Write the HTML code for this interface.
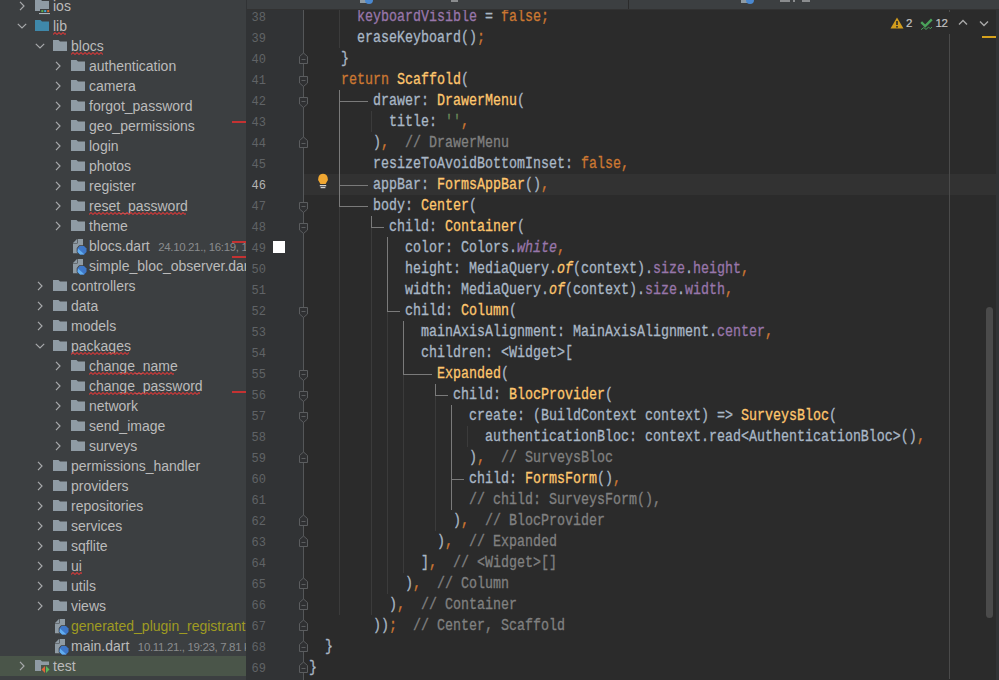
<!DOCTYPE html><html><head><meta charset="utf-8"><style>
*{box-sizing:border-box}
svg{display:block}
html,body{margin:0;padding:0;width:999px;height:680px;overflow:hidden;background:#2b2b2b}
.abs{position:absolute}
#side{position:absolute;left:0;top:0;width:246px;height:680px;background:#3c3f41;overflow:hidden}
.row{position:absolute;left:0;width:246px;height:20px;white-space:nowrap}
.row .t{position:absolute;top:0;line-height:20px;font:14px/20px "Liberation Sans",sans-serif;color:#bbbbbb}
.row .x{color:#8a8c8e;margin-left:8.5px;font-size:11.5px;letter-spacing:-0.35px}
.sq{position:absolute;height:4px;background-repeat:repeat-x}
#gut{position:absolute;left:246px;top:0;width:57px;height:680px;background:#313335}
.ln{position:absolute;left:246px;width:20px;text-align:right;font:12px/21px "Liberation Mono",monospace;color:#606366;transform-origin:0 0;transform:scaleY(1.13)}
.code{position:absolute;left:309px;white-space:pre;font:13.333px/21px "Liberation Mono",monospace;color:#a9b7c6;transform-origin:0 0;transform:scaleY(1.17);-webkit-text-stroke:0.25px}
.k{color:#cc7832}.c{color:#ffc66d}.s{color:#6a8759}.cm{color:#808080}.p{color:#9876aa}.i{font-style:italic}.ic{color:#ffc66d;font-style:italic}.pi{color:#9876aa;font-style:italic}
.g{position:absolute;background:#5e5e5e}
.ig{position:absolute;background:#393939;width:1px}
</style></head><body>

<div id="side">
<div class="row" style="top:-4px;">
<div class="abs" style="left:17.5px;top:4.5px"><svg width="8" height="10" viewBox="0 0 8 10"><path d="M2 0.8 L6 5 L2 9.2" fill="none" stroke="#a7a9ab" stroke-width="1.2"/></svg></div>
<div class="abs" style="left:35px;top:4px"><svg width="16" height="15" viewBox="0 0 16 15"><path d="M0 -1 H5.5 L7 1 H14 V11 H0 Z" fill="#8f9ba4"/><rect x="10.3" y="9" width="4.5" height="3.6" fill="#3c3f41"/><rect x="5" y="9" width="10" height="3.6" fill="#3c3f41"/><rect x="6.3" y="10.1" width="2" height="2" fill="#5fb04a"/><rect x="9.2" y="10.1" width="2" height="2" fill="#3fa8d8"/><rect x="12.2" y="10.1" width="2" height="2" fill="#e06a2a"/><rect x="4" y="13" width="11" height="1.1" fill="#aeb5ba"/></svg></div>
<div class="t" style="left:53px;color:#bbbbbb">ios</div>
</div>
<div class="row" style="top:16px;">
<div class="abs" style="left:17px;top:5.5px"><svg width="10" height="8" viewBox="0 0 10 8"><path d="M0.8 1.8 L5 6 L9.2 1.8" fill="none" stroke="#a7a9ab" stroke-width="1.2"/></svg></div>
<div class="abs" style="left:35px;top:4px"><svg width="14" height="11" viewBox="0 0 14 11"><path d="M0 0 H5.5 L7 1.5 H14 V11 H0 Z" fill="#3f88aa"/></svg></div>
<div class="t" style="left:53px;color:#bbbbbb">lib</div>
<div class="abs" style="left:53px;top:15.5px;height:3px;width:13px;overflow:hidden"><svg width="300" height="3" viewBox="0 0 300 3"><path d="M0 2.5 L2 0.5 L4 2.5 L6 0.5 L8 2.5 L10 0.5 L12 2.5 L14 0.5 L16 2.5 L18 0.5 L20 2.5 L22 0.5 L24 2.5 L26 0.5 L28 2.5 L30 0.5 L32 2.5 L34 0.5 L36 2.5 L38 0.5 L40 2.5 L42 0.5 L44 2.5 L46 0.5 L48 2.5 L50 0.5 L52 2.5 L54 0.5 L56 2.5 L58 0.5 L60 2.5 L62 0.5 L64 2.5 L66 0.5 L68 2.5 L70 0.5 L72 2.5 L74 0.5 L76 2.5 L78 0.5 L80 2.5 L82 0.5 L84 2.5 L86 0.5 L88 2.5 L90 0.5 L92 2.5 L94 0.5 L96 2.5 L98 0.5 L100 2.5 L102 0.5 L104 2.5 L106 0.5 L108 2.5 L110 0.5 L112 2.5 L114 0.5 L116 2.5 L118 0.5 L120 2.5 L122 0.5 L124 2.5 L126 0.5 L128 2.5 L130 0.5 L132 2.5 L134 0.5 L136 2.5 L138 0.5 L140 2.5 L142 0.5 L144 2.5 L146 0.5 L148 2.5 L150 0.5 L152 2.5 L154 0.5 L156 2.5 L158 0.5 L160 2.5 L162 0.5 L164 2.5 L166 0.5 L168 2.5 L170 0.5 L172 2.5 L174 0.5 L176 2.5 L178 0.5 L180 2.5 L182 0.5 L184 2.5 L186 0.5 L188 2.5 L190 0.5 L192 2.5 L194 0.5 L196 2.5 L198 0.5 L200 2.5 L202 0.5 L204 2.5 L206 0.5 L208 2.5 L210 0.5 L212 2.5 L214 0.5 L216 2.5 L218 0.5 L220 2.5 L222 0.5 L224 2.5 L226 0.5 L228 2.5 L230 0.5 L232 2.5 L234 0.5 L236 2.5 L238 0.5 L240 2.5 L242 0.5 L244 2.5 L246 0.5 L248 2.5 L250 0.5 L252 2.5 L254 0.5 L256 2.5 L258 0.5 L260 2.5 L262 0.5 L264 2.5 L266 0.5 L268 2.5 L270 0.5 L272 2.5 L274 0.5 L276 2.5 L278 0.5 L280 2.5 L282 0.5 L284 2.5 L286 0.5 L288 2.5 L290 0.5 L292 2.5 L294 0.5 L296 2.5 L298 0.5 L300 2.5" fill="none" stroke="#c03a3a" stroke-width="1.15"/></svg></div>
</div>
<div class="row" style="top:36px;">
<div class="abs" style="left:35px;top:5.5px"><svg width="10" height="8" viewBox="0 0 10 8"><path d="M0.8 1.8 L5 6 L9.2 1.8" fill="none" stroke="#a7a9ab" stroke-width="1.2"/></svg></div>
<div class="abs" style="left:53px;top:4px"><svg width="14" height="11" viewBox="0 0 14 11"><path d="M0 0 H5.5 L7 1.5 H14 V11 H0 Z" fill="#8f9ba4"/></svg></div>
<div class="t" style="left:71px;color:#bbbbbb">blocs</div>
<div class="abs" style="left:71px;top:15.5px;height:3px;width:32px;overflow:hidden"><svg width="300" height="3" viewBox="0 0 300 3"><path d="M0 2.5 L2 0.5 L4 2.5 L6 0.5 L8 2.5 L10 0.5 L12 2.5 L14 0.5 L16 2.5 L18 0.5 L20 2.5 L22 0.5 L24 2.5 L26 0.5 L28 2.5 L30 0.5 L32 2.5 L34 0.5 L36 2.5 L38 0.5 L40 2.5 L42 0.5 L44 2.5 L46 0.5 L48 2.5 L50 0.5 L52 2.5 L54 0.5 L56 2.5 L58 0.5 L60 2.5 L62 0.5 L64 2.5 L66 0.5 L68 2.5 L70 0.5 L72 2.5 L74 0.5 L76 2.5 L78 0.5 L80 2.5 L82 0.5 L84 2.5 L86 0.5 L88 2.5 L90 0.5 L92 2.5 L94 0.5 L96 2.5 L98 0.5 L100 2.5 L102 0.5 L104 2.5 L106 0.5 L108 2.5 L110 0.5 L112 2.5 L114 0.5 L116 2.5 L118 0.5 L120 2.5 L122 0.5 L124 2.5 L126 0.5 L128 2.5 L130 0.5 L132 2.5 L134 0.5 L136 2.5 L138 0.5 L140 2.5 L142 0.5 L144 2.5 L146 0.5 L148 2.5 L150 0.5 L152 2.5 L154 0.5 L156 2.5 L158 0.5 L160 2.5 L162 0.5 L164 2.5 L166 0.5 L168 2.5 L170 0.5 L172 2.5 L174 0.5 L176 2.5 L178 0.5 L180 2.5 L182 0.5 L184 2.5 L186 0.5 L188 2.5 L190 0.5 L192 2.5 L194 0.5 L196 2.5 L198 0.5 L200 2.5 L202 0.5 L204 2.5 L206 0.5 L208 2.5 L210 0.5 L212 2.5 L214 0.5 L216 2.5 L218 0.5 L220 2.5 L222 0.5 L224 2.5 L226 0.5 L228 2.5 L230 0.5 L232 2.5 L234 0.5 L236 2.5 L238 0.5 L240 2.5 L242 0.5 L244 2.5 L246 0.5 L248 2.5 L250 0.5 L252 2.5 L254 0.5 L256 2.5 L258 0.5 L260 2.5 L262 0.5 L264 2.5 L266 0.5 L268 2.5 L270 0.5 L272 2.5 L274 0.5 L276 2.5 L278 0.5 L280 2.5 L282 0.5 L284 2.5 L286 0.5 L288 2.5 L290 0.5 L292 2.5 L294 0.5 L296 2.5 L298 0.5 L300 2.5" fill="none" stroke="#c03a3a" stroke-width="1.15"/></svg></div>
</div>
<div class="row" style="top:56px;">
<div class="abs" style="left:53.5px;top:4.5px"><svg width="8" height="10" viewBox="0 0 8 10"><path d="M2 0.8 L6 5 L2 9.2" fill="none" stroke="#a7a9ab" stroke-width="1.2"/></svg></div>
<div class="abs" style="left:71px;top:4px"><svg width="14" height="11" viewBox="0 0 14 11"><path d="M0 0 H5.5 L7 1.5 H14 V11 H0 Z" fill="#8f9ba4"/></svg></div>
<div class="t" style="left:89px;color:#bbbbbb">authentication</div>
</div>
<div class="row" style="top:76px;">
<div class="abs" style="left:53.5px;top:4.5px"><svg width="8" height="10" viewBox="0 0 8 10"><path d="M2 0.8 L6 5 L2 9.2" fill="none" stroke="#a7a9ab" stroke-width="1.2"/></svg></div>
<div class="abs" style="left:71px;top:4px"><svg width="14" height="11" viewBox="0 0 14 11"><path d="M0 0 H5.5 L7 1.5 H14 V11 H0 Z" fill="#8f9ba4"/></svg></div>
<div class="t" style="left:89px;color:#bbbbbb">camera</div>
</div>
<div class="row" style="top:96px;">
<div class="abs" style="left:53.5px;top:4.5px"><svg width="8" height="10" viewBox="0 0 8 10"><path d="M2 0.8 L6 5 L2 9.2" fill="none" stroke="#a7a9ab" stroke-width="1.2"/></svg></div>
<div class="abs" style="left:71px;top:4px"><svg width="14" height="11" viewBox="0 0 14 11"><path d="M0 0 H5.5 L7 1.5 H14 V11 H0 Z" fill="#8f9ba4"/></svg></div>
<div class="t" style="left:89px;color:#bbbbbb">forgot_password</div>
</div>
<div class="row" style="top:116px;">
<div class="abs" style="left:53.5px;top:4.5px"><svg width="8" height="10" viewBox="0 0 8 10"><path d="M2 0.8 L6 5 L2 9.2" fill="none" stroke="#a7a9ab" stroke-width="1.2"/></svg></div>
<div class="abs" style="left:71px;top:4px"><svg width="14" height="11" viewBox="0 0 14 11"><path d="M0 0 H5.5 L7 1.5 H14 V11 H0 Z" fill="#8f9ba4"/></svg></div>
<div class="t" style="left:89px;color:#bbbbbb">geo_permissions</div>
</div>
<div class="row" style="top:136px;">
<div class="abs" style="left:53.5px;top:4.5px"><svg width="8" height="10" viewBox="0 0 8 10"><path d="M2 0.8 L6 5 L2 9.2" fill="none" stroke="#a7a9ab" stroke-width="1.2"/></svg></div>
<div class="abs" style="left:71px;top:4px"><svg width="14" height="11" viewBox="0 0 14 11"><path d="M0 0 H5.5 L7 1.5 H14 V11 H0 Z" fill="#8f9ba4"/></svg></div>
<div class="t" style="left:89px;color:#bbbbbb">login</div>
</div>
<div class="row" style="top:156px;">
<div class="abs" style="left:53.5px;top:4.5px"><svg width="8" height="10" viewBox="0 0 8 10"><path d="M2 0.8 L6 5 L2 9.2" fill="none" stroke="#a7a9ab" stroke-width="1.2"/></svg></div>
<div class="abs" style="left:71px;top:4px"><svg width="14" height="11" viewBox="0 0 14 11"><path d="M0 0 H5.5 L7 1.5 H14 V11 H0 Z" fill="#8f9ba4"/></svg></div>
<div class="t" style="left:89px;color:#bbbbbb">photos</div>
</div>
<div class="row" style="top:176px;">
<div class="abs" style="left:53.5px;top:4.5px"><svg width="8" height="10" viewBox="0 0 8 10"><path d="M2 0.8 L6 5 L2 9.2" fill="none" stroke="#a7a9ab" stroke-width="1.2"/></svg></div>
<div class="abs" style="left:71px;top:4px"><svg width="14" height="11" viewBox="0 0 14 11"><path d="M0 0 H5.5 L7 1.5 H14 V11 H0 Z" fill="#8f9ba4"/></svg></div>
<div class="t" style="left:89px;color:#bbbbbb">register</div>
</div>
<div class="row" style="top:196px;">
<div class="abs" style="left:53.5px;top:4.5px"><svg width="8" height="10" viewBox="0 0 8 10"><path d="M2 0.8 L6 5 L2 9.2" fill="none" stroke="#a7a9ab" stroke-width="1.2"/></svg></div>
<div class="abs" style="left:71px;top:4px"><svg width="14" height="11" viewBox="0 0 14 11"><path d="M0 0 H5.5 L7 1.5 H14 V11 H0 Z" fill="#8f9ba4"/></svg></div>
<div class="t" style="left:89px;color:#bbbbbb">reset_password</div>
<div class="abs" style="left:89px;top:15.5px;height:3px;width:97px;overflow:hidden"><svg width="300" height="3" viewBox="0 0 300 3"><path d="M0 2.5 L2 0.5 L4 2.5 L6 0.5 L8 2.5 L10 0.5 L12 2.5 L14 0.5 L16 2.5 L18 0.5 L20 2.5 L22 0.5 L24 2.5 L26 0.5 L28 2.5 L30 0.5 L32 2.5 L34 0.5 L36 2.5 L38 0.5 L40 2.5 L42 0.5 L44 2.5 L46 0.5 L48 2.5 L50 0.5 L52 2.5 L54 0.5 L56 2.5 L58 0.5 L60 2.5 L62 0.5 L64 2.5 L66 0.5 L68 2.5 L70 0.5 L72 2.5 L74 0.5 L76 2.5 L78 0.5 L80 2.5 L82 0.5 L84 2.5 L86 0.5 L88 2.5 L90 0.5 L92 2.5 L94 0.5 L96 2.5 L98 0.5 L100 2.5 L102 0.5 L104 2.5 L106 0.5 L108 2.5 L110 0.5 L112 2.5 L114 0.5 L116 2.5 L118 0.5 L120 2.5 L122 0.5 L124 2.5 L126 0.5 L128 2.5 L130 0.5 L132 2.5 L134 0.5 L136 2.5 L138 0.5 L140 2.5 L142 0.5 L144 2.5 L146 0.5 L148 2.5 L150 0.5 L152 2.5 L154 0.5 L156 2.5 L158 0.5 L160 2.5 L162 0.5 L164 2.5 L166 0.5 L168 2.5 L170 0.5 L172 2.5 L174 0.5 L176 2.5 L178 0.5 L180 2.5 L182 0.5 L184 2.5 L186 0.5 L188 2.5 L190 0.5 L192 2.5 L194 0.5 L196 2.5 L198 0.5 L200 2.5 L202 0.5 L204 2.5 L206 0.5 L208 2.5 L210 0.5 L212 2.5 L214 0.5 L216 2.5 L218 0.5 L220 2.5 L222 0.5 L224 2.5 L226 0.5 L228 2.5 L230 0.5 L232 2.5 L234 0.5 L236 2.5 L238 0.5 L240 2.5 L242 0.5 L244 2.5 L246 0.5 L248 2.5 L250 0.5 L252 2.5 L254 0.5 L256 2.5 L258 0.5 L260 2.5 L262 0.5 L264 2.5 L266 0.5 L268 2.5 L270 0.5 L272 2.5 L274 0.5 L276 2.5 L278 0.5 L280 2.5 L282 0.5 L284 2.5 L286 0.5 L288 2.5 L290 0.5 L292 2.5 L294 0.5 L296 2.5 L298 0.5 L300 2.5" fill="none" stroke="#c03a3a" stroke-width="1.15"/></svg></div>
</div>
<div class="row" style="top:216px;">
<div class="abs" style="left:53.5px;top:4.5px"><svg width="8" height="10" viewBox="0 0 8 10"><path d="M2 0.8 L6 5 L2 9.2" fill="none" stroke="#a7a9ab" stroke-width="1.2"/></svg></div>
<div class="abs" style="left:71px;top:4px"><svg width="14" height="11" viewBox="0 0 14 11"><path d="M0 0 H5.5 L7 1.5 H14 V11 H0 Z" fill="#8f9ba4"/></svg></div>
<div class="t" style="left:89px;color:#bbbbbb">theme</div>
</div>
<div class="row" style="top:236px;">
<div class="abs" style="left:72.9px;top:2.8px"><svg width="16" height="17" viewBox="0 0 16 17"><path d="M4.6 0 H10 V14.3 H0 V4.6 H4.6 Z" fill="#8f9ba4"/><path d="M0 4 L4 0 V4 Z" fill="#8f9ba4"/><path d="M6.5 7 L11 7 L13.5 9.5 L13.5 13 L11 15.5 L7 15.5 L4.5 13 L4.5 9.5 Z" fill="#3c3f41" stroke="#3c3f41" stroke-width="1.6" stroke-linejoin="round"/><path d="M6.5 7 L11 7 L13.5 9.5 L13.5 13 L11 15.5 L7 15.5 L4.5 13 L4.5 9.5 Z" fill="#3f78c8"/><path d="M5 9.5 L11.5 15.5 L7 15.5 L4.5 13 Z" fill="#62aef0"/></svg></div>
<div class="t" style="left:89px;color:#bbbbbb">blocs.dart<span class="x">24.10.21., 16:19, 1.2 kB</span></div>
</div>
<div class="row" style="top:256px;">
<div class="abs" style="left:72.9px;top:2.8px"><svg width="16" height="17" viewBox="0 0 16 17"><path d="M4.6 0 H10 V14.3 H0 V4.6 H4.6 Z" fill="#8f9ba4"/><path d="M0 4 L4 0 V4 Z" fill="#8f9ba4"/><path d="M6.5 7 L11 7 L13.5 9.5 L13.5 13 L11 15.5 L7 15.5 L4.5 13 L4.5 9.5 Z" fill="#3c3f41" stroke="#3c3f41" stroke-width="1.6" stroke-linejoin="round"/><path d="M6.5 7 L11 7 L13.5 9.5 L13.5 13 L11 15.5 L7 15.5 L4.5 13 L4.5 9.5 Z" fill="#3f78c8"/><path d="M5 9.5 L11.5 15.5 L7 15.5 L4.5 13 Z" fill="#62aef0"/></svg></div>
<div class="t" style="left:89px;color:#bbbbbb">simple_bloc_observer.dart</div>
</div>
<div class="row" style="top:276px;">
<div class="abs" style="left:35.5px;top:4.5px"><svg width="8" height="10" viewBox="0 0 8 10"><path d="M2 0.8 L6 5 L2 9.2" fill="none" stroke="#a7a9ab" stroke-width="1.2"/></svg></div>
<div class="abs" style="left:53px;top:4px"><svg width="14" height="11" viewBox="0 0 14 11"><path d="M0 0 H5.5 L7 1.5 H14 V11 H0 Z" fill="#8f9ba4"/></svg></div>
<div class="t" style="left:71px;color:#bbbbbb">controllers</div>
</div>
<div class="row" style="top:296px;">
<div class="abs" style="left:35.5px;top:4.5px"><svg width="8" height="10" viewBox="0 0 8 10"><path d="M2 0.8 L6 5 L2 9.2" fill="none" stroke="#a7a9ab" stroke-width="1.2"/></svg></div>
<div class="abs" style="left:53px;top:4px"><svg width="14" height="11" viewBox="0 0 14 11"><path d="M0 0 H5.5 L7 1.5 H14 V11 H0 Z" fill="#8f9ba4"/></svg></div>
<div class="t" style="left:71px;color:#bbbbbb">data</div>
</div>
<div class="row" style="top:316px;">
<div class="abs" style="left:35.5px;top:4.5px"><svg width="8" height="10" viewBox="0 0 8 10"><path d="M2 0.8 L6 5 L2 9.2" fill="none" stroke="#a7a9ab" stroke-width="1.2"/></svg></div>
<div class="abs" style="left:53px;top:4px"><svg width="14" height="11" viewBox="0 0 14 11"><path d="M0 0 H5.5 L7 1.5 H14 V11 H0 Z" fill="#8f9ba4"/></svg></div>
<div class="t" style="left:71px;color:#bbbbbb">models</div>
</div>
<div class="row" style="top:336px;">
<div class="abs" style="left:35px;top:5.5px"><svg width="10" height="8" viewBox="0 0 10 8"><path d="M0.8 1.8 L5 6 L9.2 1.8" fill="none" stroke="#a7a9ab" stroke-width="1.2"/></svg></div>
<div class="abs" style="left:53px;top:4px"><svg width="14" height="11" viewBox="0 0 14 11"><path d="M0 0 H5.5 L7 1.5 H14 V11 H0 Z" fill="#8f9ba4"/></svg></div>
<div class="t" style="left:71px;color:#bbbbbb">packages</div>
<div class="abs" style="left:71px;top:15.5px;height:3px;width:58px;overflow:hidden"><svg width="300" height="3" viewBox="0 0 300 3"><path d="M0 2.5 L2 0.5 L4 2.5 L6 0.5 L8 2.5 L10 0.5 L12 2.5 L14 0.5 L16 2.5 L18 0.5 L20 2.5 L22 0.5 L24 2.5 L26 0.5 L28 2.5 L30 0.5 L32 2.5 L34 0.5 L36 2.5 L38 0.5 L40 2.5 L42 0.5 L44 2.5 L46 0.5 L48 2.5 L50 0.5 L52 2.5 L54 0.5 L56 2.5 L58 0.5 L60 2.5 L62 0.5 L64 2.5 L66 0.5 L68 2.5 L70 0.5 L72 2.5 L74 0.5 L76 2.5 L78 0.5 L80 2.5 L82 0.5 L84 2.5 L86 0.5 L88 2.5 L90 0.5 L92 2.5 L94 0.5 L96 2.5 L98 0.5 L100 2.5 L102 0.5 L104 2.5 L106 0.5 L108 2.5 L110 0.5 L112 2.5 L114 0.5 L116 2.5 L118 0.5 L120 2.5 L122 0.5 L124 2.5 L126 0.5 L128 2.5 L130 0.5 L132 2.5 L134 0.5 L136 2.5 L138 0.5 L140 2.5 L142 0.5 L144 2.5 L146 0.5 L148 2.5 L150 0.5 L152 2.5 L154 0.5 L156 2.5 L158 0.5 L160 2.5 L162 0.5 L164 2.5 L166 0.5 L168 2.5 L170 0.5 L172 2.5 L174 0.5 L176 2.5 L178 0.5 L180 2.5 L182 0.5 L184 2.5 L186 0.5 L188 2.5 L190 0.5 L192 2.5 L194 0.5 L196 2.5 L198 0.5 L200 2.5 L202 0.5 L204 2.5 L206 0.5 L208 2.5 L210 0.5 L212 2.5 L214 0.5 L216 2.5 L218 0.5 L220 2.5 L222 0.5 L224 2.5 L226 0.5 L228 2.5 L230 0.5 L232 2.5 L234 0.5 L236 2.5 L238 0.5 L240 2.5 L242 0.5 L244 2.5 L246 0.5 L248 2.5 L250 0.5 L252 2.5 L254 0.5 L256 2.5 L258 0.5 L260 2.5 L262 0.5 L264 2.5 L266 0.5 L268 2.5 L270 0.5 L272 2.5 L274 0.5 L276 2.5 L278 0.5 L280 2.5 L282 0.5 L284 2.5 L286 0.5 L288 2.5 L290 0.5 L292 2.5 L294 0.5 L296 2.5 L298 0.5 L300 2.5" fill="none" stroke="#c03a3a" stroke-width="1.15"/></svg></div>
</div>
<div class="row" style="top:356px;">
<div class="abs" style="left:53.5px;top:4.5px"><svg width="8" height="10" viewBox="0 0 8 10"><path d="M2 0.8 L6 5 L2 9.2" fill="none" stroke="#a7a9ab" stroke-width="1.2"/></svg></div>
<div class="abs" style="left:71px;top:4px"><svg width="14" height="11" viewBox="0 0 14 11"><path d="M0 0 H5.5 L7 1.5 H14 V11 H0 Z" fill="#8f9ba4"/></svg></div>
<div class="t" style="left:89px;color:#bbbbbb">change_name</div>
<div class="abs" style="left:89px;top:15.5px;height:3px;width:85px;overflow:hidden"><svg width="300" height="3" viewBox="0 0 300 3"><path d="M0 2.5 L2 0.5 L4 2.5 L6 0.5 L8 2.5 L10 0.5 L12 2.5 L14 0.5 L16 2.5 L18 0.5 L20 2.5 L22 0.5 L24 2.5 L26 0.5 L28 2.5 L30 0.5 L32 2.5 L34 0.5 L36 2.5 L38 0.5 L40 2.5 L42 0.5 L44 2.5 L46 0.5 L48 2.5 L50 0.5 L52 2.5 L54 0.5 L56 2.5 L58 0.5 L60 2.5 L62 0.5 L64 2.5 L66 0.5 L68 2.5 L70 0.5 L72 2.5 L74 0.5 L76 2.5 L78 0.5 L80 2.5 L82 0.5 L84 2.5 L86 0.5 L88 2.5 L90 0.5 L92 2.5 L94 0.5 L96 2.5 L98 0.5 L100 2.5 L102 0.5 L104 2.5 L106 0.5 L108 2.5 L110 0.5 L112 2.5 L114 0.5 L116 2.5 L118 0.5 L120 2.5 L122 0.5 L124 2.5 L126 0.5 L128 2.5 L130 0.5 L132 2.5 L134 0.5 L136 2.5 L138 0.5 L140 2.5 L142 0.5 L144 2.5 L146 0.5 L148 2.5 L150 0.5 L152 2.5 L154 0.5 L156 2.5 L158 0.5 L160 2.5 L162 0.5 L164 2.5 L166 0.5 L168 2.5 L170 0.5 L172 2.5 L174 0.5 L176 2.5 L178 0.5 L180 2.5 L182 0.5 L184 2.5 L186 0.5 L188 2.5 L190 0.5 L192 2.5 L194 0.5 L196 2.5 L198 0.5 L200 2.5 L202 0.5 L204 2.5 L206 0.5 L208 2.5 L210 0.5 L212 2.5 L214 0.5 L216 2.5 L218 0.5 L220 2.5 L222 0.5 L224 2.5 L226 0.5 L228 2.5 L230 0.5 L232 2.5 L234 0.5 L236 2.5 L238 0.5 L240 2.5 L242 0.5 L244 2.5 L246 0.5 L248 2.5 L250 0.5 L252 2.5 L254 0.5 L256 2.5 L258 0.5 L260 2.5 L262 0.5 L264 2.5 L266 0.5 L268 2.5 L270 0.5 L272 2.5 L274 0.5 L276 2.5 L278 0.5 L280 2.5 L282 0.5 L284 2.5 L286 0.5 L288 2.5 L290 0.5 L292 2.5 L294 0.5 L296 2.5 L298 0.5 L300 2.5" fill="none" stroke="#c03a3a" stroke-width="1.15"/></svg></div>
</div>
<div class="row" style="top:376px;">
<div class="abs" style="left:53.5px;top:4.5px"><svg width="8" height="10" viewBox="0 0 8 10"><path d="M2 0.8 L6 5 L2 9.2" fill="none" stroke="#a7a9ab" stroke-width="1.2"/></svg></div>
<div class="abs" style="left:71px;top:4px"><svg width="14" height="11" viewBox="0 0 14 11"><path d="M0 0 H5.5 L7 1.5 H14 V11 H0 Z" fill="#8f9ba4"/></svg></div>
<div class="t" style="left:89px;color:#bbbbbb">change_password</div>
<div class="abs" style="left:89px;top:15.5px;height:3px;width:111px;overflow:hidden"><svg width="300" height="3" viewBox="0 0 300 3"><path d="M0 2.5 L2 0.5 L4 2.5 L6 0.5 L8 2.5 L10 0.5 L12 2.5 L14 0.5 L16 2.5 L18 0.5 L20 2.5 L22 0.5 L24 2.5 L26 0.5 L28 2.5 L30 0.5 L32 2.5 L34 0.5 L36 2.5 L38 0.5 L40 2.5 L42 0.5 L44 2.5 L46 0.5 L48 2.5 L50 0.5 L52 2.5 L54 0.5 L56 2.5 L58 0.5 L60 2.5 L62 0.5 L64 2.5 L66 0.5 L68 2.5 L70 0.5 L72 2.5 L74 0.5 L76 2.5 L78 0.5 L80 2.5 L82 0.5 L84 2.5 L86 0.5 L88 2.5 L90 0.5 L92 2.5 L94 0.5 L96 2.5 L98 0.5 L100 2.5 L102 0.5 L104 2.5 L106 0.5 L108 2.5 L110 0.5 L112 2.5 L114 0.5 L116 2.5 L118 0.5 L120 2.5 L122 0.5 L124 2.5 L126 0.5 L128 2.5 L130 0.5 L132 2.5 L134 0.5 L136 2.5 L138 0.5 L140 2.5 L142 0.5 L144 2.5 L146 0.5 L148 2.5 L150 0.5 L152 2.5 L154 0.5 L156 2.5 L158 0.5 L160 2.5 L162 0.5 L164 2.5 L166 0.5 L168 2.5 L170 0.5 L172 2.5 L174 0.5 L176 2.5 L178 0.5 L180 2.5 L182 0.5 L184 2.5 L186 0.5 L188 2.5 L190 0.5 L192 2.5 L194 0.5 L196 2.5 L198 0.5 L200 2.5 L202 0.5 L204 2.5 L206 0.5 L208 2.5 L210 0.5 L212 2.5 L214 0.5 L216 2.5 L218 0.5 L220 2.5 L222 0.5 L224 2.5 L226 0.5 L228 2.5 L230 0.5 L232 2.5 L234 0.5 L236 2.5 L238 0.5 L240 2.5 L242 0.5 L244 2.5 L246 0.5 L248 2.5 L250 0.5 L252 2.5 L254 0.5 L256 2.5 L258 0.5 L260 2.5 L262 0.5 L264 2.5 L266 0.5 L268 2.5 L270 0.5 L272 2.5 L274 0.5 L276 2.5 L278 0.5 L280 2.5 L282 0.5 L284 2.5 L286 0.5 L288 2.5 L290 0.5 L292 2.5 L294 0.5 L296 2.5 L298 0.5 L300 2.5" fill="none" stroke="#c03a3a" stroke-width="1.15"/></svg></div>
</div>
<div class="row" style="top:396px;">
<div class="abs" style="left:53.5px;top:4.5px"><svg width="8" height="10" viewBox="0 0 8 10"><path d="M2 0.8 L6 5 L2 9.2" fill="none" stroke="#a7a9ab" stroke-width="1.2"/></svg></div>
<div class="abs" style="left:71px;top:4px"><svg width="14" height="11" viewBox="0 0 14 11"><path d="M0 0 H5.5 L7 1.5 H14 V11 H0 Z" fill="#8f9ba4"/></svg></div>
<div class="t" style="left:89px;color:#bbbbbb">network</div>
</div>
<div class="row" style="top:416px;">
<div class="abs" style="left:53.5px;top:4.5px"><svg width="8" height="10" viewBox="0 0 8 10"><path d="M2 0.8 L6 5 L2 9.2" fill="none" stroke="#a7a9ab" stroke-width="1.2"/></svg></div>
<div class="abs" style="left:71px;top:4px"><svg width="14" height="11" viewBox="0 0 14 11"><path d="M0 0 H5.5 L7 1.5 H14 V11 H0 Z" fill="#8f9ba4"/></svg></div>
<div class="t" style="left:89px;color:#bbbbbb">send_image</div>
</div>
<div class="row" style="top:436px;">
<div class="abs" style="left:53.5px;top:4.5px"><svg width="8" height="10" viewBox="0 0 8 10"><path d="M2 0.8 L6 5 L2 9.2" fill="none" stroke="#a7a9ab" stroke-width="1.2"/></svg></div>
<div class="abs" style="left:71px;top:4px"><svg width="14" height="11" viewBox="0 0 14 11"><path d="M0 0 H5.5 L7 1.5 H14 V11 H0 Z" fill="#8f9ba4"/></svg></div>
<div class="t" style="left:89px;color:#bbbbbb">surveys</div>
</div>
<div class="row" style="top:456px;">
<div class="abs" style="left:35.5px;top:4.5px"><svg width="8" height="10" viewBox="0 0 8 10"><path d="M2 0.8 L6 5 L2 9.2" fill="none" stroke="#a7a9ab" stroke-width="1.2"/></svg></div>
<div class="abs" style="left:53px;top:4px"><svg width="14" height="11" viewBox="0 0 14 11"><path d="M0 0 H5.5 L7 1.5 H14 V11 H0 Z" fill="#8f9ba4"/></svg></div>
<div class="t" style="left:71px;color:#bbbbbb">permissions_handler</div>
</div>
<div class="row" style="top:476px;">
<div class="abs" style="left:35.5px;top:4.5px"><svg width="8" height="10" viewBox="0 0 8 10"><path d="M2 0.8 L6 5 L2 9.2" fill="none" stroke="#a7a9ab" stroke-width="1.2"/></svg></div>
<div class="abs" style="left:53px;top:4px"><svg width="14" height="11" viewBox="0 0 14 11"><path d="M0 0 H5.5 L7 1.5 H14 V11 H0 Z" fill="#8f9ba4"/></svg></div>
<div class="t" style="left:71px;color:#bbbbbb">providers</div>
</div>
<div class="row" style="top:496px;">
<div class="abs" style="left:35.5px;top:4.5px"><svg width="8" height="10" viewBox="0 0 8 10"><path d="M2 0.8 L6 5 L2 9.2" fill="none" stroke="#a7a9ab" stroke-width="1.2"/></svg></div>
<div class="abs" style="left:53px;top:4px"><svg width="14" height="11" viewBox="0 0 14 11"><path d="M0 0 H5.5 L7 1.5 H14 V11 H0 Z" fill="#8f9ba4"/></svg></div>
<div class="t" style="left:71px;color:#bbbbbb">repositories</div>
</div>
<div class="row" style="top:516px;">
<div class="abs" style="left:35.5px;top:4.5px"><svg width="8" height="10" viewBox="0 0 8 10"><path d="M2 0.8 L6 5 L2 9.2" fill="none" stroke="#a7a9ab" stroke-width="1.2"/></svg></div>
<div class="abs" style="left:53px;top:4px"><svg width="14" height="11" viewBox="0 0 14 11"><path d="M0 0 H5.5 L7 1.5 H14 V11 H0 Z" fill="#8f9ba4"/></svg></div>
<div class="t" style="left:71px;color:#bbbbbb">services</div>
</div>
<div class="row" style="top:536px;">
<div class="abs" style="left:35.5px;top:4.5px"><svg width="8" height="10" viewBox="0 0 8 10"><path d="M2 0.8 L6 5 L2 9.2" fill="none" stroke="#a7a9ab" stroke-width="1.2"/></svg></div>
<div class="abs" style="left:53px;top:4px"><svg width="14" height="11" viewBox="0 0 14 11"><path d="M0 0 H5.5 L7 1.5 H14 V11 H0 Z" fill="#8f9ba4"/></svg></div>
<div class="t" style="left:71px;color:#bbbbbb">sqflite</div>
</div>
<div class="row" style="top:556px;">
<div class="abs" style="left:35.5px;top:4.5px"><svg width="8" height="10" viewBox="0 0 8 10"><path d="M2 0.8 L6 5 L2 9.2" fill="none" stroke="#a7a9ab" stroke-width="1.2"/></svg></div>
<div class="abs" style="left:53px;top:4px"><svg width="14" height="11" viewBox="0 0 14 11"><path d="M0 0 H5.5 L7 1.5 H14 V11 H0 Z" fill="#8f9ba4"/></svg></div>
<div class="t" style="left:71px;color:#bbbbbb">ui</div>
<div class="abs" style="left:71px;top:15.5px;height:3px;width:11px;overflow:hidden"><svg width="300" height="3" viewBox="0 0 300 3"><path d="M0 2.5 L2 0.5 L4 2.5 L6 0.5 L8 2.5 L10 0.5 L12 2.5 L14 0.5 L16 2.5 L18 0.5 L20 2.5 L22 0.5 L24 2.5 L26 0.5 L28 2.5 L30 0.5 L32 2.5 L34 0.5 L36 2.5 L38 0.5 L40 2.5 L42 0.5 L44 2.5 L46 0.5 L48 2.5 L50 0.5 L52 2.5 L54 0.5 L56 2.5 L58 0.5 L60 2.5 L62 0.5 L64 2.5 L66 0.5 L68 2.5 L70 0.5 L72 2.5 L74 0.5 L76 2.5 L78 0.5 L80 2.5 L82 0.5 L84 2.5 L86 0.5 L88 2.5 L90 0.5 L92 2.5 L94 0.5 L96 2.5 L98 0.5 L100 2.5 L102 0.5 L104 2.5 L106 0.5 L108 2.5 L110 0.5 L112 2.5 L114 0.5 L116 2.5 L118 0.5 L120 2.5 L122 0.5 L124 2.5 L126 0.5 L128 2.5 L130 0.5 L132 2.5 L134 0.5 L136 2.5 L138 0.5 L140 2.5 L142 0.5 L144 2.5 L146 0.5 L148 2.5 L150 0.5 L152 2.5 L154 0.5 L156 2.5 L158 0.5 L160 2.5 L162 0.5 L164 2.5 L166 0.5 L168 2.5 L170 0.5 L172 2.5 L174 0.5 L176 2.5 L178 0.5 L180 2.5 L182 0.5 L184 2.5 L186 0.5 L188 2.5 L190 0.5 L192 2.5 L194 0.5 L196 2.5 L198 0.5 L200 2.5 L202 0.5 L204 2.5 L206 0.5 L208 2.5 L210 0.5 L212 2.5 L214 0.5 L216 2.5 L218 0.5 L220 2.5 L222 0.5 L224 2.5 L226 0.5 L228 2.5 L230 0.5 L232 2.5 L234 0.5 L236 2.5 L238 0.5 L240 2.5 L242 0.5 L244 2.5 L246 0.5 L248 2.5 L250 0.5 L252 2.5 L254 0.5 L256 2.5 L258 0.5 L260 2.5 L262 0.5 L264 2.5 L266 0.5 L268 2.5 L270 0.5 L272 2.5 L274 0.5 L276 2.5 L278 0.5 L280 2.5 L282 0.5 L284 2.5 L286 0.5 L288 2.5 L290 0.5 L292 2.5 L294 0.5 L296 2.5 L298 0.5 L300 2.5" fill="none" stroke="#c03a3a" stroke-width="1.15"/></svg></div>
</div>
<div class="row" style="top:576px;">
<div class="abs" style="left:35.5px;top:4.5px"><svg width="8" height="10" viewBox="0 0 8 10"><path d="M2 0.8 L6 5 L2 9.2" fill="none" stroke="#a7a9ab" stroke-width="1.2"/></svg></div>
<div class="abs" style="left:53px;top:4px"><svg width="14" height="11" viewBox="0 0 14 11"><path d="M0 0 H5.5 L7 1.5 H14 V11 H0 Z" fill="#8f9ba4"/></svg></div>
<div class="t" style="left:71px;color:#bbbbbb">utils</div>
</div>
<div class="row" style="top:596px;">
<div class="abs" style="left:35.5px;top:4.5px"><svg width="8" height="10" viewBox="0 0 8 10"><path d="M2 0.8 L6 5 L2 9.2" fill="none" stroke="#a7a9ab" stroke-width="1.2"/></svg></div>
<div class="abs" style="left:53px;top:4px"><svg width="14" height="11" viewBox="0 0 14 11"><path d="M0 0 H5.5 L7 1.5 H14 V11 H0 Z" fill="#8f9ba4"/></svg></div>
<div class="t" style="left:71px;color:#bbbbbb">views</div>
</div>
<div class="row" style="top:616px;">
<div class="abs" style="left:54.9px;top:2.8px"><svg width="16" height="17" viewBox="0 0 16 17"><path d="M4.6 0 H10 V14.3 H0 V4.6 H4.6 Z" fill="#8f9ba4"/><path d="M0 4 L4 0 V4 Z" fill="#8f9ba4"/><path d="M6.5 7 L11 7 L13.5 9.5 L13.5 13 L11 15.5 L7 15.5 L4.5 13 L4.5 9.5 Z" fill="#3c3f41" stroke="#3c3f41" stroke-width="1.6" stroke-linejoin="round"/><path d="M6.5 7 L11 7 L13.5 9.5 L13.5 13 L11 15.5 L7 15.5 L4.5 13 L4.5 9.5 Z" fill="#3f78c8"/><path d="M5 9.5 L11.5 15.5 L7 15.5 L4.5 13 Z" fill="#62aef0"/></svg></div>
<div class="t" style="left:71px;color:#9f9b22">generated_plugin_registrant.dart</div>
</div>
<div class="row" style="top:636px;">
<div class="abs" style="left:54.9px;top:2.8px"><svg width="16" height="17" viewBox="0 0 16 17"><path d="M4.6 0 H10 V14.3 H0 V4.6 H4.6 Z" fill="#8f9ba4"/><path d="M0 4 L4 0 V4 Z" fill="#8f9ba4"/><path d="M6.5 7 L11 7 L13.5 9.5 L13.5 13 L11 15.5 L7 15.5 L4.5 13 L4.5 9.5 Z" fill="#3c3f41" stroke="#3c3f41" stroke-width="1.6" stroke-linejoin="round"/><path d="M6.5 7 L11 7 L13.5 9.5 L13.5 13 L11 15.5 L7 15.5 L4.5 13 L4.5 9.5 Z" fill="#3f78c8"/><path d="M5 9.5 L11.5 15.5 L7 15.5 L4.5 13 Z" fill="#62aef0"/></svg></div>
<div class="t" style="left:71px;color:#bbbbbb">main.dart<span class="x">10.11.21., 19:23, 7.81 kB</span></div>
</div>
<div class="row" style="top:656px;background:#4a5549;">
<div class="abs" style="left:17.5px;top:4.5px"><svg width="8" height="10" viewBox="0 0 8 10"><path d="M2 0.8 L6 5 L2 9.2" fill="none" stroke="#a7a9ab" stroke-width="1.2"/></svg></div>
<div class="abs" style="left:35px;top:4px"><svg width="16" height="14" viewBox="0 0 16 14"><path d="M0 0 H5.5 L7 1.5 H14 V11 H0 Z" fill="#8f9ba4"/><rect x="6" y="5" width="10" height="9" fill="#4a5549"/><path d="M10 6 L6.5 9.5 L10 13 Z" fill="#e0653a"/><path d="M11 6 L14.5 9.5 L11 13 Z" fill="#5cb85a"/></svg></div>
<div class="t" style="left:53px;color:#bbbbbb">test</div>
</div>
</div>
<div class="abs" style="left:246px;top:0;width:1px;height:680px;background:#2f3133"></div>
<div id="gut"></div>
<div class="abs" style="left:303px;top:0;width:693px;height:680px;background:#2b2b2b"></div>
<div class="abs" style="left:303px;top:174px;width:693px;height:21px;background:#323232"></div>
<div class="ln" style="top:6.2px;color:#606366">38</div>
<div class="ln" style="top:27.2px;color:#606366">39</div>
<div class="ln" style="top:48.2px;color:#606366">40</div>
<div class="ln" style="top:69.2px;color:#606366">41</div>
<div class="ln" style="top:90.2px;color:#606366">42</div>
<div class="ln" style="top:111.2px;color:#606366">43</div>
<div class="ln" style="top:132.2px;color:#606366">44</div>
<div class="ln" style="top:153.2px;color:#606366">45</div>
<div class="ln" style="top:174.2px;color:#b4b4b4">46</div>
<div class="ln" style="top:195.2px;color:#606366">47</div>
<div class="ln" style="top:216.2px;color:#606366">48</div>
<div class="ln" style="top:237.2px;color:#606366">49</div>
<div class="ln" style="top:258.2px;color:#606366">50</div>
<div class="ln" style="top:279.2px;color:#606366">51</div>
<div class="ln" style="top:300.2px;color:#606366">52</div>
<div class="ln" style="top:321.2px;color:#606366">53</div>
<div class="ln" style="top:342.2px;color:#606366">54</div>
<div class="ln" style="top:363.2px;color:#606366">55</div>
<div class="ln" style="top:384.2px;color:#606366">56</div>
<div class="ln" style="top:405.2px;color:#606366">57</div>
<div class="ln" style="top:426.2px;color:#606366">58</div>
<div class="ln" style="top:447.2px;color:#606366">59</div>
<div class="ln" style="top:468.2px;color:#606366">60</div>
<div class="ln" style="top:489.2px;color:#606366">61</div>
<div class="ln" style="top:510.2px;color:#606366">62</div>
<div class="ln" style="top:531.2px;color:#606366">63</div>
<div class="ln" style="top:552.2px;color:#606366">64</div>
<div class="ln" style="top:573.2px;color:#606366">65</div>
<div class="ln" style="top:594.2px;color:#606366">66</div>
<div class="ln" style="top:615.2px;color:#606366">67</div>
<div class="ln" style="top:636.2px;color:#606366">68</div>
<div class="ln" style="top:657.2px;color:#606366">69</div>
<div class="code" style="top:4.5px">      <span class="p">keyboardVisible</span> = <span class="k">false;</span></div>
<div class="code" style="top:25.5px">      eraseKeyboard()<span class="k">;</span></div>
<div class="code" style="top:46.5px">    }</div>
<div class="code" style="top:67.5px">    <span class="k">return </span><span class="c">Scaffold</span>(</div>
<div class="code" style="top:88.5px">        drawer: <span class="c">DrawerMenu</span>(</div>
<div class="code" style="top:109.5px">          title: <span class="s">''</span><span class="k">,</span></div>
<div class="code" style="top:130.5px">        )<span class="k">,</span>  <span class="cm">// DrawerMenu</span></div>
<div class="code" style="top:151.5px">        resizeToAvoidBottomInset: <span class="k">false,</span></div>
<div class="code" style="top:172.5px">        appBar: <span class="c">FormsAppBar</span>()<span class="k">,</span></div>
<div class="code" style="top:193.5px">        body: <span class="c">Center</span>(</div>
<div class="code" style="top:214.5px">          child: <span class="c">Container</span>(</div>
<div class="code" style="top:235.5px">            color: Colors.<span class="pi">white</span><span class="k">,</span></div>
<div class="code" style="top:256.5px">            height: MediaQuery.<span class="ic">of</span>(context).<span class="p">size</span>.<span class="p">height</span><span class="k">,</span></div>
<div class="code" style="top:277.5px">            width: MediaQuery.<span class="ic">of</span>(context).<span class="p">size</span>.<span class="p">width</span><span class="k">,</span></div>
<div class="code" style="top:298.5px">            child: <span class="c">Column</span>(</div>
<div class="code" style="top:319.5px">              mainAxisAlignment: MainAxisAlignment.<span class="p">center</span><span class="k">,</span></div>
<div class="code" style="top:340.5px">              children: &lt;Widget&gt;[</div>
<div class="code" style="top:361.5px">                <span class="c">Expanded</span>(</div>
<div class="code" style="top:382.5px">                  child: <span class="c">BlocProvider</span>(</div>
<div class="code" style="top:403.5px">                    create: (BuildContext context) =&gt; <span class="c">SurveysBloc</span>(</div>
<div class="code" style="top:424.5px">                      authenticationBloc: context.read&lt;AuthenticationBloc&gt;()<span class="k">,</span></div>
<div class="code" style="top:445.5px">                    )<span class="k">,</span>  <span class="cm">// SurveysBloc</span></div>
<div class="code" style="top:466.5px">                    child: <span class="c">FormsForm</span>()<span class="k">,</span></div>
<div class="code" style="top:487.5px">                    <span class="cm">// child: SurveysForm(),</span></div>
<div class="code" style="top:508.5px">                  )<span class="k">,</span>  <span class="cm">// BlocProvider</span></div>
<div class="code" style="top:529.5px">                )<span class="k">,</span>  <span class="cm">// Expanded</span></div>
<div class="code" style="top:550.5px">              ]<span class="k">,</span>  <span class="cm">// &lt;Widget&gt;[]</span></div>
<div class="code" style="top:571.5px">            )<span class="k">,</span>  <span class="cm">// Column</span></div>
<div class="code" style="top:592.5px">          )<span class="k">,</span>  <span class="cm">// Container</span></div>
<div class="code" style="top:613.5px">        ))<span class="k">;</span>  <span class="cm">// Center, Scaffold</span></div>
<div class="code" style="top:634.5px">  }</div>
<div class="code" style="top:655.5px">}</div>
<div class="abs" style="left:303px;top:10px;width:1px;height:670px;background:#555759"></div>
<svg class="abs" style="left:298px;top:75px" width="11" height="12" viewBox="0 0 11 12"><path d="M1.5 1.5 H9.5 V8 L5.5 11.5 L1.5 8 Z" fill="#2f3032" stroke="#5b5d5f" stroke-width="1"/><path d="M3.5 5.5 H7.5" stroke="#5b5d5f" stroke-width="1"/></svg>
<svg class="abs" style="left:298px;top:96px" width="11" height="12" viewBox="0 0 11 12"><path d="M1.5 1.5 H9.5 V8 L5.5 11.5 L1.5 8 Z" fill="#2f3032" stroke="#5b5d5f" stroke-width="1"/><path d="M3.5 5.5 H7.5" stroke="#5b5d5f" stroke-width="1"/></svg>
<svg class="abs" style="left:298px;top:201px" width="11" height="12" viewBox="0 0 11 12"><path d="M1.5 1.5 H9.5 V8 L5.5 11.5 L1.5 8 Z" fill="#2f3032" stroke="#5b5d5f" stroke-width="1"/><path d="M3.5 5.5 H7.5" stroke="#5b5d5f" stroke-width="1"/></svg>
<svg class="abs" style="left:298px;top:222px" width="11" height="12" viewBox="0 0 11 12"><path d="M1.5 1.5 H9.5 V8 L5.5 11.5 L1.5 8 Z" fill="#2f3032" stroke="#5b5d5f" stroke-width="1"/><path d="M3.5 5.5 H7.5" stroke="#5b5d5f" stroke-width="1"/></svg>
<svg class="abs" style="left:298px;top:306px" width="11" height="12" viewBox="0 0 11 12"><path d="M1.5 1.5 H9.5 V8 L5.5 11.5 L1.5 8 Z" fill="#2f3032" stroke="#5b5d5f" stroke-width="1"/><path d="M3.5 5.5 H7.5" stroke="#5b5d5f" stroke-width="1"/></svg>
<svg class="abs" style="left:298px;top:369px" width="11" height="12" viewBox="0 0 11 12"><path d="M1.5 1.5 H9.5 V8 L5.5 11.5 L1.5 8 Z" fill="#2f3032" stroke="#5b5d5f" stroke-width="1"/><path d="M3.5 5.5 H7.5" stroke="#5b5d5f" stroke-width="1"/></svg>
<svg class="abs" style="left:298px;top:390px" width="11" height="12" viewBox="0 0 11 12"><path d="M1.5 1.5 H9.5 V8 L5.5 11.5 L1.5 8 Z" fill="#2f3032" stroke="#5b5d5f" stroke-width="1"/><path d="M3.5 5.5 H7.5" stroke="#5b5d5f" stroke-width="1"/></svg>
<svg class="abs" style="left:298px;top:411px" width="11" height="12" viewBox="0 0 11 12"><path d="M1.5 1.5 H9.5 V8 L5.5 11.5 L1.5 8 Z" fill="#2f3032" stroke="#5b5d5f" stroke-width="1"/><path d="M3.5 5.5 H7.5" stroke="#5b5d5f" stroke-width="1"/></svg>
<svg class="abs" style="left:298px;top:52px" width="11" height="12" viewBox="0 0 11 12"><path d="M1.5 4.5 L5.5 1 L9.5 4.5 V11.5 H1.5 Z" fill="#2f3032" stroke="#5b5d5f" stroke-width="1"/><path d="M3.5 7.5 H7.5" stroke="#5b5d5f" stroke-width="1"/></svg>
<svg class="abs" style="left:298px;top:136px" width="11" height="12" viewBox="0 0 11 12"><path d="M1.5 4.5 L5.5 1 L9.5 4.5 V11.5 H1.5 Z" fill="#2f3032" stroke="#5b5d5f" stroke-width="1"/><path d="M3.5 7.5 H7.5" stroke="#5b5d5f" stroke-width="1"/></svg>
<svg class="abs" style="left:298px;top:451px" width="11" height="12" viewBox="0 0 11 12"><path d="M1.5 4.5 L5.5 1 L9.5 4.5 V11.5 H1.5 Z" fill="#2f3032" stroke="#5b5d5f" stroke-width="1"/><path d="M3.5 7.5 H7.5" stroke="#5b5d5f" stroke-width="1"/></svg>
<svg class="abs" style="left:298px;top:514px" width="11" height="12" viewBox="0 0 11 12"><path d="M1.5 4.5 L5.5 1 L9.5 4.5 V11.5 H1.5 Z" fill="#2f3032" stroke="#5b5d5f" stroke-width="1"/><path d="M3.5 7.5 H7.5" stroke="#5b5d5f" stroke-width="1"/></svg>
<svg class="abs" style="left:298px;top:535px" width="11" height="12" viewBox="0 0 11 12"><path d="M1.5 4.5 L5.5 1 L9.5 4.5 V11.5 H1.5 Z" fill="#2f3032" stroke="#5b5d5f" stroke-width="1"/><path d="M3.5 7.5 H7.5" stroke="#5b5d5f" stroke-width="1"/></svg>
<svg class="abs" style="left:298px;top:577px" width="11" height="12" viewBox="0 0 11 12"><path d="M1.5 4.5 L5.5 1 L9.5 4.5 V11.5 H1.5 Z" fill="#2f3032" stroke="#5b5d5f" stroke-width="1"/><path d="M3.5 7.5 H7.5" stroke="#5b5d5f" stroke-width="1"/></svg>
<svg class="abs" style="left:298px;top:598px" width="11" height="12" viewBox="0 0 11 12"><path d="M1.5 4.5 L5.5 1 L9.5 4.5 V11.5 H1.5 Z" fill="#2f3032" stroke="#5b5d5f" stroke-width="1"/><path d="M3.5 7.5 H7.5" stroke="#5b5d5f" stroke-width="1"/></svg>
<svg class="abs" style="left:298px;top:619px" width="11" height="12" viewBox="0 0 11 12"><path d="M1.5 4.5 L5.5 1 L9.5 4.5 V11.5 H1.5 Z" fill="#2f3032" stroke="#5b5d5f" stroke-width="1"/><path d="M3.5 7.5 H7.5" stroke="#5b5d5f" stroke-width="1"/></svg>
<svg class="abs" style="left:298px;top:640px" width="11" height="12" viewBox="0 0 11 12"><path d="M1.5 4.5 L5.5 1 L9.5 4.5 V11.5 H1.5 Z" fill="#2f3032" stroke="#5b5d5f" stroke-width="1"/><path d="M3.5 7.5 H7.5" stroke="#5b5d5f" stroke-width="1"/></svg>
<svg class="abs" style="left:298px;top:661px" width="11" height="12" viewBox="0 0 11 12"><path d="M1.5 4.5 L5.5 1 L9.5 4.5 V11.5 H1.5 Z" fill="#2f3032" stroke="#5b5d5f" stroke-width="1"/><path d="M3.5 7.5 H7.5" stroke="#5b5d5f" stroke-width="1"/></svg>
<div class="abs" style="left:339px;top:6px;width:1px;height:42px;background:#3b3b3b"></div>
<div class="abs" style="left:339px;top:90px;width:1px;height:525px;background:#3b3b3b"></div>
<div class="abs" style="left:371px;top:111px;width:1px;height:21px;background:#3b3b3b"></div>
<div class="abs" style="left:371px;top:216px;width:1px;height:399px;background:#3b3b3b"></div>
<div class="abs" style="left:387px;top:237px;width:1px;height:357px;background:#3b3b3b"></div>
<div class="abs" style="left:403px;top:321px;width:1px;height:252px;background:#3b3b3b"></div>
<div class="abs" style="left:435px;top:384px;width:1px;height:147px;background:#3b3b3b"></div>
<div class="abs" style="left:467px;top:426px;width:1px;height:21px;background:#3b3b3b"></div>
<div class="abs" style="left:339px;top:90px;width:1px;height:117px;background:#7a7a7a"></div>
<div class="abs" style="left:339px;top:101px;width:29px;height:1px;background:#7a7a7a"></div>
<div class="abs" style="left:339px;top:185px;width:29px;height:1px;background:#7a7a7a"></div>
<div class="abs" style="left:339px;top:206px;width:29px;height:1px;background:#7a7a7a"></div>
<div class="abs" style="left:371px;top:216px;width:1px;height:12px;background:#7a7a7a"></div>
<div class="abs" style="left:371px;top:227px;width:13px;height:1px;background:#7a7a7a"></div>
<div class="abs" style="left:387px;top:237px;width:1px;height:75px;background:#7a7a7a"></div>
<div class="abs" style="left:387px;top:311px;width:13px;height:1px;background:#7a7a7a"></div>
<div class="abs" style="left:403px;top:321px;width:1px;height:54px;background:#7a7a7a"></div>
<div class="abs" style="left:403px;top:374px;width:29px;height:1px;background:#7a7a7a"></div>
<div class="abs" style="left:435px;top:384px;width:1px;height:12px;background:#7a7a7a"></div>
<div class="abs" style="left:435px;top:395px;width:13px;height:1px;background:#7a7a7a"></div>
<div class="abs" style="left:451px;top:405px;width:1px;height:105px;background:#7a7a7a"></div>
<div class="abs" style="left:451px;top:479px;width:13px;height:1px;background:#7a7a7a"></div>
<div class="abs" style="left:949px;top:10px;width:1px;height:2px;background:#4a4a4a"></div>
<div class="abs" style="left:949px;top:34px;width:1px;height:645px;background:#4a4a4a"></div>
<div class="abs" style="left:996px;top:10px;width:3px;height:670px;background:#313335"></div>
<div class="abs" style="left:986px;top:307px;width:7px;height:311px;border-radius:3.5px;background:#4b4b4b"></div>
<div class="abs" style="left:982px;top:36px;width:14px;height:2px;background:#d6a21d"></div>
<svg class="abs" style="left:890px;top:17px" width="14" height="12" viewBox="0 0 14 12"><path d="M7 0.5 L13.5 11.5 H0.5 Z" fill="#d29d1d"/><rect x="6.2" y="4" width="1.6" height="4" fill="#2b2b2b"/><rect x="6.2" y="9" width="1.6" height="1.6" fill="#2b2b2b"/></svg>
<div class="abs" style="left:906px;top:15px;font:11.5px/16px 'Liberation Sans',sans-serif;color:#c4c4c4;-webkit-text-stroke:0.2px">2</div>
<svg class="abs" style="left:920px;top:17px" width="14" height="14" viewBox="0 0 14 14"><path d="M1.2 5.2 L5.2 9 L11.8 2.3" fill="none" stroke="#4aa35a" stroke-width="2.4"/><path d="M1.1 12.7 L3.8 10.5 L6 12.4 L8.6 10.1 L10.2 11.7 L12 10.1" fill="none" stroke="#4aa35a" stroke-width="1"/></svg>
<div class="abs" style="left:935.5px;top:15px;font:11.5px/16px 'Liberation Sans',sans-serif;color:#c4c4c4;-webkit-text-stroke:0.2px;letter-spacing:-0.3px">12</div>
<svg class="abs" style="left:958px;top:19px" width="10" height="7" viewBox="0 0 10 7"><path d="M1 5.5 L5 1.5 L9 5.5" fill="none" stroke="#a9a9a9" stroke-width="1.4"/></svg>
<svg class="abs" style="left:979px;top:20px" width="10" height="7" viewBox="0 0 10 7"><path d="M1 1.5 L5 5.5 L9 1.5" fill="none" stroke="#a9a9a9" stroke-width="1.4"/></svg>
<svg class="abs" style="left:317px;top:173px" width="12" height="16" viewBox="0 0 12 16"><path d="M6 0.8 A5.1 5.1 0 0 1 9.6 9.3 L8.6 10.9 H3.4 L2.4 9.3 A5.1 5.1 0 0 1 6 0.8 Z" fill="#f0a732"/><rect x="2.8" y="12" width="6.4" height="1.3" fill="#cfcfcf"/><rect x="3.6" y="14" width="4.8" height="1.2" fill="#cfcfcf"/></svg>
<div class="abs" style="left:273px;top:241px;width:12px;height:12px;background:#ffffff"></div>
<div class="abs" style="left:232px;top:121px;width:14px;height:2px;background:#c43232"></div>
<div class="abs" style="left:232px;top:241px;width:14px;height:2px;background:#c43232"></div>
<div class="abs" style="left:232px;top:256px;width:14px;height:2px;background:#c43232"></div>
<div class="abs" style="left:232px;top:391px;width:14px;height:2px;background:#c43232"></div>
<div class="abs" style="left:247px;top:0;width:752px;height:9px;background:#3c3f41"></div>
<div class="abs" style="left:247px;top:9px;width:752px;height:1px;background:#323232"></div>
<div class="abs" style="left:628px;top:0;width:1px;height:9px;background:#2b2b2b"></div>
<div class="abs" style="left:360px;top:0;width:7px;height:3px;background:#8f9ba4"></div>
<div class="abs" style="left:365px;top:0;width:8px;height:4px;border-radius:0 0 4px 4px;background:#4a88d0"></div>
<div class="abs" style="left:741px;top:0;width:7px;height:3px;background:#8f9ba4"></div>
<div class="abs" style="left:746px;top:0;width:8px;height:4px;border-radius:0 0 4px 4px;background:#4a88d0"></div>
<div class="abs" style="left:451px;top:0;width:7px;height:2px;background:#8a8c8e"></div>
<div class="abs" style="left:780px;top:0;width:10px;height:2px;background:#8a8c8e"></div>
<div class="abs" style="left:793px;top:0;width:2px;height:2px;background:#8a8c8e"></div>
<div class="abs" style="left:802px;top:0;width:8px;height:2px;background:#8a8c8e"></div>
</body></html>
